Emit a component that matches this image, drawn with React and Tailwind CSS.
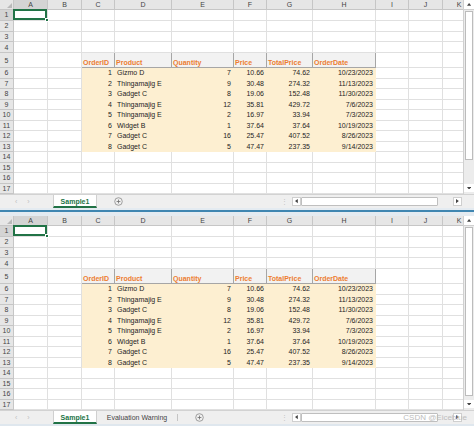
import React from 'react';

const GRID =
  'grid grid-cols-[14px_34px_34px_33px_57px_62px_33px_46px_63px_33px_34px_33px]';

const LETTERS = ['A', 'B', 'C', 'D', 'E', 'F', 'G', 'H', 'I', 'J', 'K'];

const HEADERS = ['OrderID', 'Product', 'Quantity', 'Price', 'TotalPrice', 'OrderDate'];

const ORDERS = [
  ['1', 'Gizmo D', '7', '10.66', '74.62', '10/23/2023'],
  ['2', 'Thingamajig E', '9', '30.48', '274.32', '11/13/2023'],
  ['3', 'Gadget C', '8', '19.06', '152.48', '11/30/2023'],
  ['4', 'Thingamajig E', '12', '35.81', '429.72', '7/6/2023'],
  ['5', 'Thingamajig E', '2', '16.97', '33.94', '7/3/2023'],
  ['6', 'Widget B', '1', '37.64', '37.64', '10/19/2023'],
  ['7', 'Gadget C', '16', '25.47', '407.52', '8/26/2023'],
  ['8', 'Gadget C', '5', '47.47', '237.35', '9/14/2023'],
];

function rowHeight(n) {
  if (n === 5) return 'h-[15px]';
  if (n <= 4) return 'h-[10.75px]';
  return 'h-[10.5px]';
}

function Arrow({ dir }) {
  const points = {
    up: '0,4 3,0 6,4',
    down: '0,0 3,4 6,0',
    left: '4,0 0,3 4,6',
    right: '0,0 4,3 0,6',
  }[dir];
  const size = dir === 'up' || dir === 'down' ? { w: 6, h: 4 } : { w: 4, h: 6 };
  return (
    <svg width={size.w * 0.7} height={size.h * 0.7} viewBox={`0 0 ${size.w} ${size.h}`}>
      <polygon points={points} fill="#444" />
    </svg>
  );
}

function HeaderRow() {
  return (
    <div className={`${GRID} h-[10px] text-[7px] text-[#444]`}>
      <div className="relative border-r border-b border-[#c6c6c6] bg-[#e6e6e6]">
        <svg className="absolute right-[1px] bottom-[1px]" width="5" height="5" viewBox="0 0 5 5">
          <polygon points="5,0 5,5 0,5" fill="#b9b9b9" />
        </svg>
      </div>
      {LETTERS.map((l) => (
        <div
          key={l}
          className={`flex items-center justify-center border-r border-b border-[#c6c6c6] leading-none ${
            l === 'A' ? 'bg-[#d4d4d4]' : 'bg-[#e6e6e6]'
          }`}
        >
          {l}
        </div>
      ))}
    </div>
  );
}

function Cell({ col, row }) {
  const inTable = col >= 3 && col <= 8;
  if (row === 5 && inTable) {
    return (
      <div className="flex items-end border-r border-b border-[#a6a6a6] bg-[#f2f2f2] pb-[1px] pl-[1px] font-bold leading-none text-[#ed7d31]">
        {HEADERS[col - 3]}
      </div>
    );
  }
  if (row >= 6 && row <= 13 && inTable) {
    const value = ORDERS[row - 6][col - 3];
    const left = col === 4;
    return (
      <div
        className={`flex items-center border-r border-b border-[#fdefd1] bg-[#fdefd1] leading-none text-[#1e1e1e] ${
          left ? 'justify-start pl-[2px]' : 'justify-end pr-[2px]'
        }`}
      >
        {value}
      </div>
    );
  }
  if (row === 1 && col === 1) {
    return (
      <div className="relative border-r border-b border-[#e0e0e0] bg-white">
        <div className="absolute -top-[1px] -left-[1px] right-0 bottom-0 border-2 border-[#217346]" />
        <div className="absolute -right-[2px] -bottom-[2px] h-[4px] w-[4px] border border-white bg-[#217346]" />
      </div>
    );
  }
  return <div className="border-r border-b border-[#e0e0e0] bg-white" />;
}

function BodyRow({ n }) {
  return (
    <div className={`${GRID} ${rowHeight(n)} text-[7px]`}>
      <div
        className={`flex items-center justify-center border-r border-b border-[#c6c6c6] leading-none text-[#444] ${
          n === 1 ? 'bg-[#d4d4d4]' : 'bg-[#e6e6e6]'
        }`}
      >
        {n}
      </div>
      {LETTERS.map((_, i) => (
        <Cell key={i} col={i + 1} row={n} />
      ))}
    </div>
  );
}

function VScroll({ thumb }) {
  return (
    <div className="flex w-[11px] flex-col border-l border-[#d0d0d0] bg-[#ececec]">
      <div className="flex h-[10px] items-center justify-center border-b border-[#d0d0d0] bg-white">
        <Arrow dir="up" />
      </div>
      <div className={`mx-[1px] mt-[1px] border border-[#bcbcbc] bg-white ${thumb}`} />
      <div className="flex-1" />
      <div className="mb-[2px] flex h-[8px] items-center justify-center bg-white">
        <Arrow dir="down" />
      </div>
    </div>
  );
}

function PlusCircle() {
  return (
    <svg width="9" height="9" viewBox="0 0 9 9">
      <circle cx="4.5" cy="4.5" r="3.8" fill="none" stroke="#8a8a8a" strokeWidth="0.8" />
      <path d="M4.5 2.6v3.8M2.6 4.5h3.8" stroke="#6f6f6f" strokeWidth="0.8" />
    </svg>
  );
}

function TabBar({ warning }) {
  return (
    <div className="flex h-[14px] items-stretch border-t border-[#d2d2d2] bg-[#efefef] text-[7px] leading-none">
      <div className="flex w-[53px] items-center gap-[10px] pl-[15px] text-[#c0c0c0]">
        <span>‹</span>
        <span>›</span>
      </div>
      <div className="flex w-[44px] items-center justify-center border-x border-b-2 border-[#d0d0d0] border-b-[#217346] bg-white pt-[1px] font-bold text-[#217346]">
        Sample1
      </div>
      {warning && (
        <>
          <div className="flex w-[80px] items-center justify-center text-[#444]">
            Evaluation Warning
          </div>
          <div className="my-[3px] w-px bg-[#c4c4c4]" />
        </>
      )}
      <div className="flex items-center pl-[17px]">
        <PlusCircle />
      </div>
      <div className="ml-auto flex w-[196px] items-center">
        <div className="flex w-[12px] justify-center text-[#c4c4c4]">⋮</div>
        <div className="ml-[2px] flex h-[9px] w-[9px] items-center justify-center border border-[#cfcfcf] bg-white">
          <Arrow dir="left" />
        </div>
        <div className="h-[9px] w-[137px] rounded-[1px] border border-[#bfbfbf] bg-white" />
        <div className="flex-1" />
        <div className="flex h-[9px] w-[9px] items-center justify-center border border-[#cfcfcf] bg-white">
          <Arrow dir="right" />
        </div>
        <div className="w-[12px]" />
      </div>
    </div>
  );
}

function Sheet({ warning, thumb }) {
  const rows = Array.from({ length: 17 }, (_, i) => i + 1);
  return (
    <div className="flex flex-col bg-white">
      <div className="flex">
        <div className="w-[463px] overflow-hidden">
          <HeaderRow />
          {rows.map((n) => (
            <BodyRow key={n} n={n} />
          ))}
        </div>
        <VScroll thumb={thumb} />
      </div>
      <TabBar warning={warning} />
    </div>
  );
}

export default function App() {
  return (
    <div className="relative h-[426px] w-[474px] overflow-hidden bg-[#dfe7ee] font-['Liberation_Sans',Arial,sans-serif]">
      <Sheet thumb="h-[149px]" />
      <div className="h-[8px] bg-[#e4ebf1] pt-[2px]">
        <div className="h-[2px] bg-[#3f86b1]" />
      </div>
      <Sheet warning thumb="h-[169px]" />
      <div className="absolute right-[7px] bottom-[4px] text-[8px] leading-none text-[#bdbdbd]">
        CSDN @Eiceblue
      </div>
    </div>
  );
}
